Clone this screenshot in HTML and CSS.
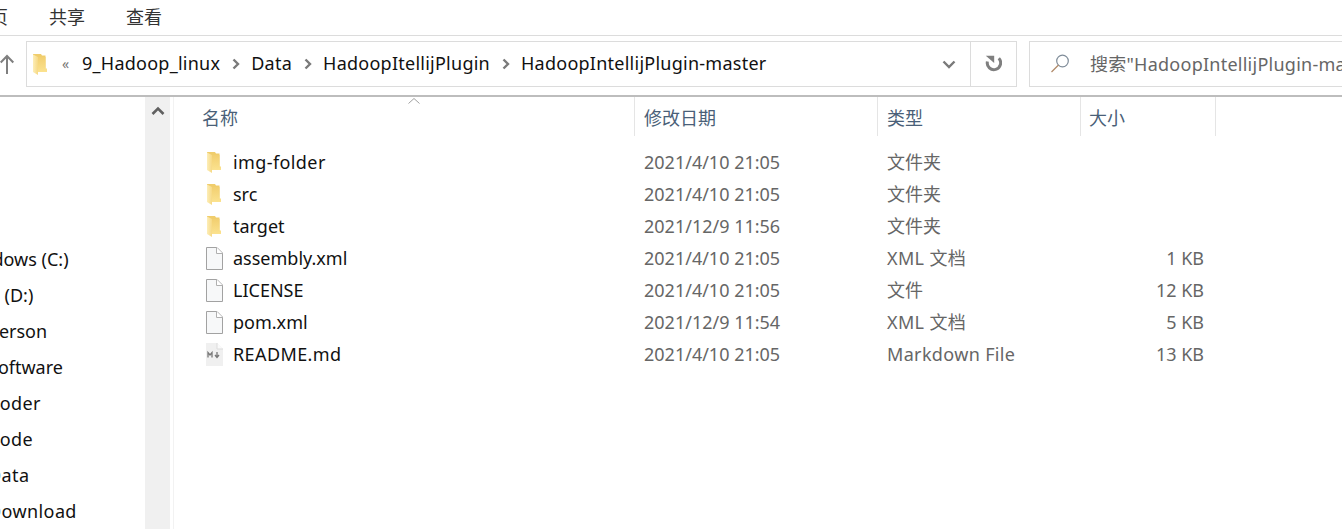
FILE: index.html
```html
<!DOCTYPE html>
<html lang="zh">
<head>
<meta charset="utf-8">
<title>HadoopIntellijPlugin-master</title>
<link rel="stylesheet" href="styles.css">
</head>
<body>
<svg class="defs" width="0" height="0" aria-hidden="true">
  <defs>
    <linearGradient id="flap" x1="0" y1="0" x2="1" y2="0">
      <stop offset="0" stop-color="#fdeeb8"/>
      <stop offset="1" stop-color="#f6d985"/>
    </linearGradient>
    <linearGradient id="panel" x1="0" y1="0" x2="0" y2="1">
      <stop offset="0" stop-color="#f2cf70"/>
      <stop offset="1" stop-color="#fbe28f"/>
    </linearGradient>
    <symbol id="folder" viewBox="0 0 14 21">
      <path d="M0 0h8l1 1.500h3.500V18H0z" fill="#f0cd6c"/>
      <path d="M5 3h7.500v11.500H14V18H5z" fill="url(#panel)"/>
      <path d="M0 .5l5 2.500V21L0 18z" fill="url(#flap)"/>
    </symbol>
    <symbol id="doc" viewBox="0 0 17 23">
      <path d="M.5.5h10.500l5.500 5.500v16.500H.5z" fill="#f7f8f9" stroke="#a2a2a2"/>
      <path d="M10.500.5v6h6" fill="#fff" stroke="#b0b0b0"/>
    </symbol>
    <symbol id="md" viewBox="0 0 17 23">
      <path d="M0 0h11l6 6v17H0z" fill="#f0f0f0"/>
      <path d="M11 0v6h6" fill="#fafafa" stroke="#dcdcdc"/>
      <path d="M2 14.500v-5l2 2.500 2-2.500v5M11 9v5M9 12l2 2.500 2-2.500" fill="none" stroke="#777" stroke-width="1.300"/>
    </symbol>
  </defs>
</svg>

<div class="window">
  <nav class="ribbon">
    <span class="tab tab-cut">页</span>
    <span class="tab tab-share">共享</span>
    <span class="tab tab-view">查看</span>
  </nav>

  <div class="addressbar">
    <svg class="up" width="15" height="20" viewBox="0 0 15 20"><path d="M7 20V2M.7 8.500L7 2l6.300 6.500" fill="none" stroke="#7f7f7f" stroke-width="2"/></svg>
    <div class="address">
      <svg class="crumb-folder" width="14" height="21"><use href="#folder"/></svg>
      <span class="overflow">«</span>
      <span class="crumb">9_Hadoop_linux</span>
      <svg class="sep" width="8" height="12" viewBox="0 0 8 12"><path d="M1.500 1.500L6 6l-4.500 4.500" fill="none" stroke="#7a7a7a" stroke-width="2.400"/></svg>
      <span class="crumb">Data</span>
      <svg class="sep" width="8" height="12" viewBox="0 0 8 12"><path d="M1.500 1.500L6 6l-4.500 4.500" fill="none" stroke="#7a7a7a" stroke-width="2.400"/></svg>
      <span class="crumb">HadoopItellijPlugin</span>
      <svg class="sep" width="8" height="12" viewBox="0 0 8 12"><path d="M1.500 1.500L6 6l-4.500 4.500" fill="none" stroke="#7a7a7a" stroke-width="2.400"/></svg>
      <span class="crumb">HadoopIntellijPlugin-master</span>
      <span class="spacer"></span>
      <svg class="drop" width="14" height="9" viewBox="0 0 14 9"><path d="M1.500 1.500L7 7l5.500-5.500" fill="none" stroke="#7a7a7a" stroke-width="2.400"/></svg>
      <div class="refresh">
        <svg width="17" height="18" viewBox="0 0 17 18"><path d="M13.800 3.300A6.700 6.700 0 1 1 2.400 6.500" fill="none" stroke="#7f7f7f" stroke-width="3"/><path d="M.8.800h8.400v7.200z" fill="#7f7f7f"/></svg>
      </div>
    </div>
    <div class="search">
      <svg class="lens" width="20" height="20" viewBox="0 0 20 20"><circle cx="12.500" cy="7" r="5.800" fill="none" stroke="#7f8c99" stroke-width="1.200"/><path d="M8.500 11L1.500 18" fill="none" stroke="#b08a68" stroke-width="1.300"/></svg>
      <span class="search-text">搜索"HadoopIntellijPlugin-master"</span>
    </div>
  </div>

  <div class="body">
    <aside class="tree">
      <div class="tree-scroll">
        <div class="tree-list">
          <span class="tree-item tree-drive">Windows (C:)</span>
          <span class="tree-item tree-drive">Data (D:)</span>
          <span class="tree-item tree-folder">Person</span>
          <span class="tree-item tree-folder">Software</span>
          <span class="tree-item tree-folder wide">Coder</span>
          <span class="tree-item tree-folder wide">Code</span>
          <span class="tree-item tree-folder wide">Data</span>
          <span class="tree-item tree-folder wide">Download</span>
        </div>
      </div>
      <div class="scrollbar">
        <svg width="14" height="10" viewBox="0 0 14 10"><path d="M1.500 8L7 2.500 12.500 8" fill="none" stroke="#606060" stroke-width="2.600"/></svg>
      </div>
    </aside>

    <main class="files">
      <svg class="sort" width="12" height="6" viewBox="0 0 12 6"><path d="M.5 5.500L6 .5l5.500 5" fill="none" stroke="#a0a0a0"/></svg>
      <div class="row head">
        <span class="col name head-cell"><span class="head-name">名称</span></span>
        <span class="col date head-cell">修改日期</span>
        <span class="col type head-cell">类型</span>
        <span class="col size head-cell">大小</span>
      </div>
      <div class="rows">
        <div class="row item"><span class="col name wide"><svg class="ic ic-folder"><use href="#folder"/></svg>img-folder</span><span class="col date">2021/4/10 21:05</span><span class="col type">文件夹</span><span class="col size"></span></div>
        <div class="row item"><span class="col name"><svg class="ic ic-folder"><use href="#folder"/></svg>src</span><span class="col date">2021/4/10 21:05</span><span class="col type">文件夹</span><span class="col size"></span></div>
        <div class="row item"><span class="col name"><svg class="ic ic-folder"><use href="#folder"/></svg>target</span><span class="col date">2021/12/9 11:56</span><span class="col type">文件夹</span><span class="col size"></span></div>
        <div class="row item"><span class="col name"><svg class="ic ic-doc"><use href="#doc"/></svg>assembly.xml</span><span class="col date">2021/4/10 21:05</span><span class="col type type-latin">XML 文档</span><span class="col size">1 KB</span></div>
        <div class="row item"><span class="col name"><svg class="ic ic-doc"><use href="#doc"/></svg>LICENSE</span><span class="col date">2021/4/10 21:05</span><span class="col type">文件</span><span class="col size">12 KB</span></div>
        <div class="row item"><span class="col name"><svg class="ic ic-doc"><use href="#doc"/></svg>pom.xml</span><span class="col date">2021/12/9 11:54</span><span class="col type type-latin">XML 文档</span><span class="col size">5 KB</span></div>
        <div class="row item"><span class="col name wide"><svg class="ic ic-doc"><use href="#md"/></svg>README.md</span><span class="col date">2021/4/10 21:05</span><span class="col type type-latin">Markdown File</span><span class="col size">13 KB</span></div>
      </div>
    </main>
  </div>
</div>
</body>
</html>
```

FILE: styles.css
```css
* { box-sizing: border-box; }
html, body { margin: 0; height: 100%; background: #fff; overflow: hidden; }
body { font-family: "Noto Sans", "Noto Sans CJK SC", sans-serif; font-size: 18px; color: #111; }
.defs { display: block; height: 0; }

.window { width: 1342px; height: 529px; display: flex; flex-direction: column; overflow: hidden; }

.ribbon { height: 36px; border-bottom: 1px solid #dcdcdc; display: flex; align-items: center; overflow: hidden; padding-bottom: 3px; color: #333; font-family: "Noto Sans CJK SC", sans-serif; font-size: 18px; }
.tab { display: block; white-space: nowrap; }
.tab-cut { width: 8px; direction: rtl; overflow: hidden; margin-right: 41px; }
.tab-share { width: 77px; }

.addressbar { height: 61px; padding-top: 5px; border-bottom: 2px solid #bdbdbd; display: flex; align-items: flex-start; }
.up { flex: none; margin: 13px 11px 0 0; }
.address { width: 991px; height: 46px; border: 1px solid #dcdcdc; display: flex; align-items: center; padding-left: 6px; flex: none; }
.crumb-folder { flex: none; }
.overflow { color: #777; font-size: 14px; margin: 0 12px 0 15px; width: 8px; line-height: 1; }
.crumb { white-space: nowrap; color: #111; margin-bottom: 2px; letter-spacing: .25px; }
.sep { flex: none; margin: 0 11px 0 12px; }
.spacer { flex: 1; }
.drop { flex: none; margin-right: 14px; }
.refresh { width: 46px; height: 44px; border-left: 1px solid #dcdcdc; display: flex; align-items: center; justify-content: center; flex: none; }

.search { flex: 1; height: 46px; margin-left: 12px; border: 1px solid #dcdcdc; border-right: 0; display: flex; align-items: center; padding-left: 20px; overflow: hidden; white-space: nowrap; color: #666; }
.lens { flex: none; margin-right: 20px; }
.search-text { flex: none; margin-bottom: 2px; letter-spacing: .25px; }

.body { flex: 1; display: flex; min-height: 0; }
.tree { width: 174px; flex: none; display: flex; }
.tree-scroll { width: 145px; overflow: hidden; flex: none; }
.tree-list { display: flex; flex-direction: column; padding-top: 144px; }
.tree-item { height: 36px; line-height: 36px; white-space: nowrap; display: block; }
.tree-drive { margin-left: -40px; }
.tree-folder { margin-left: -12px; }
.wide { letter-spacing: .4px; }
.scrollbar { width: 25px; background: #f0f0f0; flex: none; display: flex; justify-content: center; align-items: flex-start; padding-top: 9px; margin-right: 4px; }

.files { flex: 1; position: relative; border-left: 1px solid #f2f2f2; margin-left: -1px; }
.sort { position: absolute; left: 234px; top: 1px; }
.row { display: flex; }
.head { height: 39px; }
.head-cell { color: #4a5f78; border-right: 1px solid #e5e5e5; padding-left: 9px; height: 39px; line-height: 40px; font-family: "Noto Sans CJK SC", sans-serif; }
.head-name { padding-left: 19px; }
.col { flex: none; white-space: nowrap; }
.name { width: 461px; }
.date { width: 243px; padding-left: 9px; }
.type { width: 203px; padding-left: 9px; }
.type-latin { letter-spacing: .35px; }
.size { width: 135px; padding-left: 8px; }
.rows { padding-top: 10px; }
.item { height: 32px; line-height: 32px; }
.item .name { display: flex; align-items: center; padding-left: 32px; }
.item .date, .item .type { color: #666; }
.item .size { color: #666; text-align: right; padding-right: 12px; }
.ic { flex: none; }
.ic-folder { width: 14px; height: 21px; margin-left: 1px; margin-right: 12px; }
.ic-doc { width: 17px; height: 23px; margin-right: 10px; }
```
